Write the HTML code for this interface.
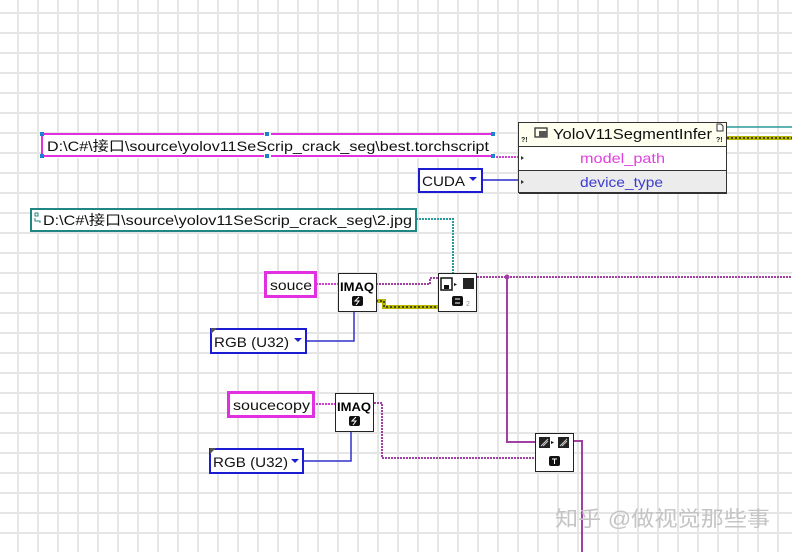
<!DOCTYPE html>
<html><head><meta charset="utf-8">
<style>
html,body{margin:0;padding:0;background:#fff;}
svg{display:block;}
text{font-family:"Liberation Sans","Noto Sans CJK SC",sans-serif;}
</style></head>
<body>
<svg width="792" height="552" viewBox="0 0 792 552" xmlns="http://www.w3.org/2000/svg">
<defs>
<pattern id="g" x="17" y="12" width="20" height="20" patternUnits="userSpaceOnUse">
<rect x="0" y="0" width="2" height="20" fill="#e6e6e6"/>
<rect x="0" y="0" width="20" height="2" fill="#e6e6e6"/>
</pattern>
</defs>
<rect width="792" height="552" fill="#fff"/>
<rect width="792" height="552" fill="url(#g)"/>

<g fill="none" stroke-width="2">
<path d="M416 219 H453 V276" stroke="#2a9a9a" stroke-dasharray="2 1"/>
<path d="M493 157 H518" stroke="#d040d0" stroke-dasharray="2 1"/>
<path d="M482 180 H518" stroke="#2828c8" stroke-width="1.5"/>
<path d="M727 127 H792" stroke="#2a9a9a" stroke-width="1.5"/>
<path d="M727 138 H792" stroke="#b8b800" stroke-width="4"/>
<path d="M727 138 H792" stroke="#222" stroke-width="1.5" stroke-dasharray="2 2"/>
<path d="M316 284 H338" stroke="#d040d0" stroke-dasharray="2 1"/>
<path d="M376 284 H430 V278 H438" stroke="#a040a0" stroke-dasharray="2 1"/>
<path d="M376 301 H384 V307 H438" stroke="#b8b800" stroke-width="4"/>
<path d="M376 301 H384 V307 H438" stroke="#222" stroke-width="1.5" stroke-dasharray="2 2"/>
<path d="M354 312 V341 H306" stroke="#3030c8" stroke-width="1.5"/>
<path d="M477 277 H792" stroke="#a040a0" stroke-dasharray="2 1"/>
<path d="M507 277 V442 H535" stroke="#a040a0"/>
<path d="M313 404 H335" stroke="#d040d0" stroke-dasharray="2 1"/>
<path d="M374 403 H382 V458 H535" stroke="#a040a0" stroke-dasharray="2 1"/>
<path d="M351 432 V461 H303" stroke="#3030c8" stroke-width="1.5"/>
<path d="M574 441 H582 V552" stroke="#a040a0"/>
</g>
<circle cx="507" cy="277" r="2.5" fill="#a040a0"/>

<rect x="41" y="133" width="452" height="25" fill="#fff"/>
<rect x="44" y="133" width="220" height="2" fill="#e030e0"/>
<rect x="271" y="133" width="220" height="2" fill="#e030e0"/>
<rect x="44" y="155" width="220" height="2" fill="#e030e0"/>
<rect x="271" y="155" width="220" height="2" fill="#e030e0"/>
<rect x="41" y="134" width="2" height="22" fill="#e030e0"/>
<rect x="40" y="132" width="4" height="4" fill="#2080d0"/>
<rect x="40" y="154" width="4" height="4" fill="#2080d0"/>
<rect x="265" y="132" width="4" height="4" fill="#2080d0"/>
<rect x="265" y="154" width="4" height="4" fill="#2080d0"/>
<rect x="491" y="132" width="4" height="4" fill="#2080d0"/>
<rect x="491" y="154" width="4" height="4" fill="#2080d0"/>
<text x="47" y="151" font-size="14" fill="#111" textLength="442" lengthAdjust="spacingAndGlyphs">D:\C#\接口\source\yolov11SeScrip_crack_seg\best.torchscript</text>

<rect x="419" y="169" width="63" height="23" fill="#fff" stroke="#1c1cd0" stroke-width="2"/>
<text x="422" y="186" font-size="14" fill="#111" textLength="43" lengthAdjust="spacingAndGlyphs">CUDA</text>
<path d="M469 177 h8 l-4 4 z" fill="#1c1cd0"/>

<rect x="518.5" y="122.5" width="208" height="70" fill="#fff" stroke="#333"/>
<rect x="519" y="123" width="207" height="23" fill="#fffff0"/>
<line x1="519" y1="146.5" x2="726" y2="146.5" stroke="#333"/>
<rect x="519" y="171" width="207" height="21" fill="#ececec"/>
<line x1="519" y1="170.5" x2="726" y2="170.5" stroke="#333"/>
<line x1="519" y1="193" x2="727" y2="193" stroke="#333" stroke-width="2"/>
<text x="521" y="142" font-size="7" font-weight="bold" fill="#222">?!</text>
<rect x="535" y="128" width="12" height="9" fill="none" stroke="#333" stroke-width="1.3"/>
<rect x="539" y="131" width="8" height="6" fill="#555"/>
<text x="553" y="139" font-size="15" fill="#111" textLength="159" lengthAdjust="spacingAndGlyphs">YoloV11SegmentInfer</text>
<path d="M717 124 h4 l2 2 v5 h-6 z" fill="#fff" stroke="#333"/>
<text x="716" y="142" font-size="7" font-weight="bold" fill="#222">?!</text>
<path d="M521 156 l3 2 -3 2z" fill="#333"/>
<path d="M521 180 l3 2 -3 2z" fill="#333"/>
<text x="580" y="163" font-size="14" fill="#e040e0" textLength="85" lengthAdjust="spacingAndGlyphs">model_path</text>
<text x="580" y="187" font-size="14" fill="#3c3cd0" textLength="83" lengthAdjust="spacingAndGlyphs">device_type</text>

<rect x="31" y="209" width="385" height="22" fill="#fff" stroke="#208585" stroke-width="2"/>
<path d="M35 213 h3 v3 h-3z M35 218 v3 h5 v2" fill="none" stroke="#208585" stroke-width="1"/>
<text x="43" y="225" font-size="14" fill="#111" textLength="369" lengthAdjust="spacingAndGlyphs">D:\C#\接口\source\yolov11SeScrip_crack_seg\2.jpg</text>

<rect x="265.5" y="272.5" width="50" height="24" fill="#fff" stroke="#e030e0" stroke-width="3"/>
<text x="270" y="290" font-size="14" fill="#111" textLength="42" lengthAdjust="spacingAndGlyphs">souce</text>
<rect x="338.5" y="273.5" width="38" height="38" fill="#fff" stroke="#222"/>
<text x="357" y="291" font-size="12" font-weight="bold" fill="#000" text-anchor="middle" textLength="34" lengthAdjust="spacingAndGlyphs">IMAQ</text>
<rect x="352" y="296" width="11" height="10" rx="2" fill="#111"/>
<path d="M359 297 l-4 4 h4 l-3 4" stroke="#fff" stroke-width="1" fill="none"/>
<rect x="438.5" y="273.5" width="38" height="38" fill="#fff" stroke="#222"/>
<rect x="441" y="278" width="11" height="12" fill="#fff" stroke="#111" stroke-width="1.5"/>
<rect x="444" y="285" width="5" height="4" fill="#111"/>
<path d="M454 283 l3 1.5 -3 1.5z" fill="#111"/>
<rect x="463" y="278" width="11" height="11" fill="#222"/>
<rect x="452" y="296" width="11" height="10" rx="2" fill="#111"/>
<path d="M455 299 h5 M455 303 h5" stroke="#fff"/>
<text x="466" y="306" font-size="7" fill="#999">2</text>
<rect x="211" y="329" width="95" height="24" fill="#fff" stroke="#1c1cd0" stroke-width="2"/>
<path d="M211 328 h6 l-6 6z" fill="#555"/>
<text x="214" y="347" font-size="14" fill="#111" textLength="75" lengthAdjust="spacingAndGlyphs">RGB (U32)</text>
<path d="M294 338 h8 l-4 4 z" fill="#1c1cd0"/>

<rect x="228.5" y="392.5" width="85" height="24" fill="#fff" stroke="#e030e0" stroke-width="3"/>
<text x="233" y="410" font-size="14" fill="#111" textLength="77" lengthAdjust="spacingAndGlyphs">soucecopy</text>
<rect x="335.5" y="393.5" width="38" height="38" fill="#fff" stroke="#222"/>
<text x="354" y="411" font-size="12" font-weight="bold" fill="#000" text-anchor="middle" textLength="34" lengthAdjust="spacingAndGlyphs">IMAQ</text>
<rect x="349" y="416" width="11" height="10" rx="2" fill="#111"/>
<path d="M356 417 l-4 4 h4 l-3 4" stroke="#fff" stroke-width="1" fill="none"/>
<rect x="210" y="449" width="93" height="24" fill="#fff" stroke="#1c1cd0" stroke-width="2"/>
<path d="M210 448 h6 l-6 6z" fill="#555"/>
<text x="213" y="467" font-size="14" fill="#111" textLength="75" lengthAdjust="spacingAndGlyphs">RGB (U32)</text>
<path d="M291 459 h8 l-4 4 z" fill="#1c1cd0"/>

<rect x="535.5" y="433.5" width="38" height="38" fill="#fff" stroke="#222"/>
<rect x="539" y="437" width="11" height="11" fill="#222"/>
<path d="M541 446 l7-7 M543 446 l5-5" stroke="#ccc"/>
<path d="M551 441 l3 1.5 -3 1.5z" fill="#111"/>
<rect x="558" y="437" width="11" height="11" fill="#222"/>
<path d="M560 446 l7-7 M562 446 l5-5" stroke="#ccc"/>
<rect x="549" y="456" width="11" height="10" rx="2" fill="#111"/>
<path d="M552 459 h5 M554.5 459 v5" stroke="#fff"/>

<text x="555" y="526" font-size="21" fill="#c4c4c4" textLength="215" lengthAdjust="spacingAndGlyphs">知乎 @做视觉那些事</text>
</svg>
</body></html>
